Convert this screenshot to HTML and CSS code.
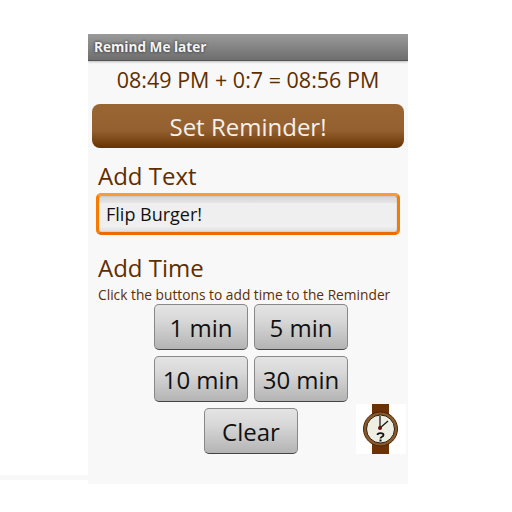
FILE: index.html
```html
<!DOCTYPE html>
<html lang="en">
<head>
    <meta charset="UTF-8">
    <meta name="viewport" content="width=device-width, initial-scale=1.0">
    <title>Remind Me later</title>
    <link rel="stylesheet" href="styles.css">
</head>
<body>
    <div class="edge-strip"></div>
    <div class="phone">
        <div class="title-bar">Remind Me later</div>
        <div class="time-sum">08:49 PM + 0:7 = 08:56 PM</div>
        <button class="set-btn">Set Reminder!</button>
        <h2 class="add-text">Add Text</h2>
        <div class="text-box">Flip Burger!</div>
        <h2 class="add-time">Add Time</h2>
        <p class="hint">Click the buttons to add time to the Reminder</p>
        <div class="time-grid">
            <button class="time-btn">1 min</button>
            <button class="time-btn">5 min</button>
            <button class="time-btn">10 min</button>
            <button class="time-btn">30 min</button>
        </div>
        <div class="clear-row">
            <button class="time-btn">Clear</button>
        </div>
        <!-- watch picture sits in the corner, over the clear row -->
        <svg class="watch" width="50" height="50" viewBox="0 0 50 50">
            <rect x="16" y="0" width="17" height="50" fill="#6b3208"/>
            <circle cx="24.500" cy="25" r="17" fill="#8a5a2b" stroke="#4a2508" stroke-width="1"/>
            <circle cx="24.500" cy="25" r="14" fill="#eeeee2" stroke="#2c1a0a" stroke-width="1"/>
            <path d="M24 24V12M24 24L32 17" stroke="#111" stroke-width="1.2" fill="none"/>
            <circle cx="24" cy="24" r="2" fill="#6b1010"/>
            <path d="M21.500 31c0-2.500 6-2.500 6 0c0 2-3 1.500-3 3.500" stroke="#111" stroke-width="1.8" fill="none"/>
            <rect x="23.500" y="35.500" width="2" height="2" fill="#111"/>
        </svg>
    </div>
</body>
</html>
```

FILE: styles.css
```css
body {
    margin: 0;
    background: #fff;
    font-family: "Open Sans", sans-serif;
}
.edge-strip {
    position: absolute;
    left: 0;
    top: 475px;
    width: 88px;
    height: 5px;
    background: #f8f8f8;
}
.phone {
    position: relative;
    width: 320px;
    height: 450px;
    margin: 34px 0 0 88px;
    background: #f8f8f8;
    overflow: hidden;
}
.title-bar {
    height: 26px;
    padding-left: 6px;
    line-height: 25px;
    font-size: 13.6px;
    font-weight: bold;
    color: #f4f4f4;
    text-shadow: 0 0 3px #222;
    background: linear-gradient(#9a9a9a, #6e6e6e);
    border-bottom: 1px solid #555;
    box-shadow: 0 1px 2px #bbb;
}
.time-sum {
    margin-top: 6px;
    height: 26px;
    line-height: 26px;
    text-align: center;
    font-size: 21.5px;
    color: #5f2e00;
}
.set-btn {
    display: block;
    width: 312px;
    height: 44px;
    margin: 11px 0 0 4px;
    padding: 0;
    border: none;
    border-radius: 8px;
    font-family: inherit;
    font-size: 24px;
    color: #f5f0e8;
    background: linear-gradient(#996633 0, #946030 60%, #663300 100%);
}
h2 {
    margin: 0 0 0 10px;
    font-size: 24px;
    font-weight: normal;
    line-height: 30px;
    color: #5f2e00;
}
.add-text {
    margin-top: 13px;
}
.text-box {
    height: 36px;
    margin: 2px 8px 0 8px;
    padding-left: 7px;
    line-height: 36px;
    font-size: 18px;
    color: #111;
    border: 3px solid #f57c00;
    border-top-color: #fb9a3a;
    border-bottom-color: #ee6a00;
    border-radius: 5px;
    background: linear-gradient(#d4d4d4, #e4e4e4 18%, #efefef 20%, #efefef 85%, #dcdcdc);
    box-shadow: inset 0 0 1px #777;
}
.add-time {
    margin-top: 18px;
}
.hint {
    margin: 4px 0 0 10px;
    font-size: 13.75px;
    line-height: 16px;
    color: #5f2e00;
}
.time-grid {
    display: grid;
    grid-template-columns: 94px 94px;
    grid-auto-rows: 46px;
    gap: 6px;
    justify-content: center;
    margin-top: 1px;
    padding-left: 6px;
}
.clear-row {
    display: flex;
    justify-content: center;
    margin-top: 6px;
    padding-left: 6px;
}
.time-btn {
    width: 94px;
    height: 46px;
    padding: 0;
    border: 1px solid #888;
    border-bottom-color: #444;
    border-radius: 5px;
    font-family: inherit;
    font-size: 24px;
    color: #111;
    background: linear-gradient(#e4e4e4, #d8d8d8 35%, #b4b4b4 100%);
}
.watch {
    position: absolute;
    left: 268px;
    top: 370px;
    background: #fff;
}
```
